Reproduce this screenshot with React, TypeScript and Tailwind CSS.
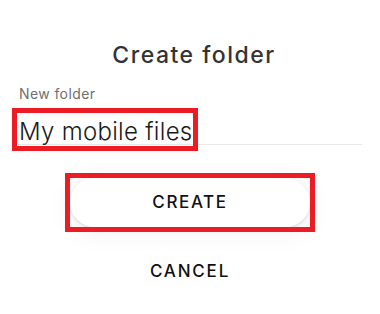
import React from "react";

export default function App() {
  return (
    <div
      className="w-[380px] h-[314px] bg-white flex flex-col overflow-hidden"
      style={{ fontFamily: "Inter, 'Noto Sans', sans-serif" }}
    >
      <div className="pt-[44px] pl-[8px] text-center text-[23px] leading-[23px] font-medium text-[#333333] tracking-[1.5px]">
        Create folder
      </div>
      <div className="mt-[20px] pl-[19px] text-[14px] leading-[14px] text-[#707070] tracking-[0.4px]">
        New folder
      </div>
      <div className="mt-[19px] mx-[18px] border-b border-[#e8e8e8] flex">
        <span className="relative inline-block pl-[1px] text-[24px] leading-[24px] font-light text-[#1a1a1a] tracking-[0.3px]">
          My mobile files
          <span className="absolute -top-[12px] -left-[6px] -right-[5px] -bottom-[7px] border-[5px] border-[#ed1c24] pointer-events-none" />
        </span>
      </div>
      <div className="mt-[33px] flex justify-center">
        <button className="relative w-[240px] h-[49px] rounded-full bg-white text-[17px] font-medium text-[#111111] tracking-[1.6px] shadow-[0_4px_26px_rgba(0,0,0,0.08),0_1px_3px_rgba(0,0,0,0.12)]">
          CREATE
          <span className="absolute -inset-[5px] border-[5px] border-[#ed1c24] pointer-events-none" />
        </button>
      </div>
      <div className="mt-[36px] text-center text-[17px] leading-[17px] font-medium text-[#111111] tracking-[1.8px]">
        CANCEL
      </div>
    </div>
  );
}
